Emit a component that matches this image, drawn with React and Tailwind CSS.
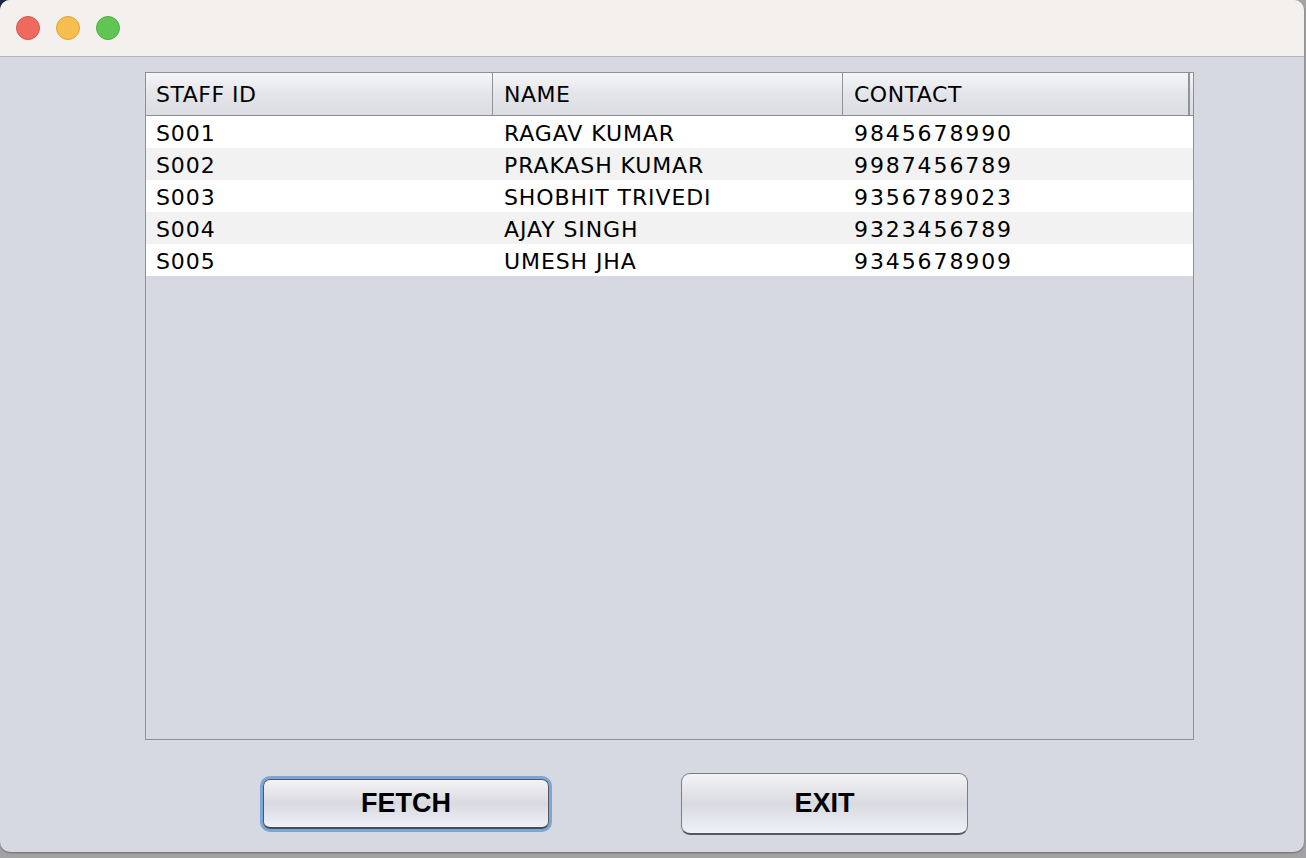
import React from "react";

const rows = [
  ["S001", "RAGAV KUMAR", "9845678990"],
  ["S002", "PRAKASH KUMAR", "9987456789"],
  ["S003", "SHOBHIT TRIVEDI", "9356789023"],
  ["S004", "AJAY SINGH", "9323456789"],
  ["S005", "UMESH JHA", "9345678909"],
];

const cellFont = { fontFamily: '"DejaVu Sans", "Noto Sans", sans-serif' };

export default function App() {
  return (
    <div className="w-[1306px] h-[858px] bg-[#a3a3a6] overflow-hidden relative">
      <div className="absolute left-0 top-0 w-[20px] h-[20px] bg-[#1b2a44]" />
      <div className="relative w-[1304px] h-[852px] rounded-[10px] overflow-hidden bg-[#d6d9e1] flex flex-col shadow-[0_1px_2px_rgba(0,0,0,0.35)]">
        {/* title bar */}
        <div className="h-[57px] shrink-0 bg-[#f4f0ed] border-b border-[#b4b4b8] flex items-center pl-[16px] gap-[16px]">
          <div className="w-[24px] h-[24px] rounded-full bg-[#ee6a5f] border border-[#d9574d]" />
          <div className="w-[24px] h-[24px] rounded-full bg-[#f5be4f] border border-[#dca43b]" />
          <div className="w-[24px] h-[24px] rounded-full bg-[#61c554] border border-[#50ad45]" />
        </div>

        {/* table */}
        <div className="ml-[145px] mt-[15px] w-[1049px] h-[668px] border border-[#8c9098] bg-[#d6d9e1] flex flex-col" style={cellFont}>
          <div className="h-[43px] shrink-0 flex bg-gradient-to-b from-[#f6f6f8] via-[#e4e5e9] to-[#dcdde2] border-b border-[#8a8d94]">
            <div className="w-[347px] border-r border-[#8f929a] pl-[10px] flex items-center text-[22px] tracking-[0.5px] text-black">STAFF ID</div>
            <div className="w-[350px] border-r border-[#8f929a] pl-[11px] flex items-center text-[22px] tracking-[0.5px] text-black">NAME</div>
            <div className="w-[347px] border-r-2 border-[#8f929a] pl-[11px] flex items-center text-[22px] tracking-[0.5px] text-black">CONTACT</div>
          </div>
          {rows.map((r, i) => (
            <div key={r[0]} className={`h-[32px] pt-[3px] flex items-center text-[22px] tracking-[0.9px] text-black ${i % 2 === 0 ? "bg-white" : "bg-[#f2f2f2]"}`}>
              <div className="w-[347px] pl-[10px]">{r[0]}</div>
              <div className="w-[350px] pl-[11px]">{r[1]}</div>
              <div className="w-[347px] pl-[11px] tracking-[1.9px]">{r[2]}</div>
            </div>
          ))}
        </div>

        {/* buttons */}
        <div className="flex items-center mt-[33px] pl-[260px] gap-[129px]" style={{ fontFamily: '"Liberation Sans", Arial, sans-serif' }}>
          <div className="w-[292px] h-[56px] rounded-[10px] border-[3px] border-[#7aa6d8]">
            <div className="w-full h-full rounded-[7px] border border-[#55575c] border-b-2 border-b-[#4a4c50] bg-gradient-to-b from-[#f4f4f6] via-[#d9dae0] to-[#eff1f9] flex items-center justify-center text-[27px] font-bold text-black">
              FETCH
            </div>
          </div>
          <div className="w-[287px] h-[62px] rounded-[9px] border border-[#7a7c81] border-b-2 border-b-[#55575c] bg-gradient-to-b from-[#f4f4f6] via-[#d9dae0] to-[#eff1f9] flex items-center justify-center text-[27px] font-bold text-black">
            EXIT
          </div>
        </div>
      </div>
    </div>
  );
}
